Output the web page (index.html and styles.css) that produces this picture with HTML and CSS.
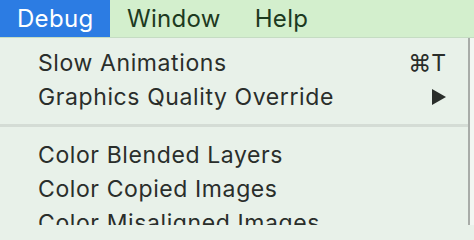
FILE: index.html
```html
<!DOCTYPE html>
<html>
<head>
<meta charset="utf-8">
<link rel="stylesheet" href="styles.css">
</head>
<body>
<div class="menubar">
  <div class="mitem active">Debug</div>
  <div class="mitem">Window</div>
  <div class="mitem">Help</div>
</div>
<div class="stage">
  <div class="menu">
    <div class="row"><span>Slow Animations</span><span class="key">⌘T</span></div>
    <div class="row"><span>Graphics Quality Override</span><span class="arrow"></span></div>
    <div class="sep"></div>
    <div class="row"><span>Color Blended Layers</span></div>
    <div class="row"><span>Color Copied Images</span></div>
    <div class="row"><span>Color Misaligned Images</span></div>
  </div>
  <div class="outside"></div>
</div>
</body>
</html>
```
FILE: styles.css
```css
html, body {
  margin: 0;
  padding: 0;
  height: 225px;
  overflow: hidden;
  background: #e8f1e9;
  font-family: Inter, "Liberation Sans", Arial, sans-serif;
}
body {
  display: flex;
  flex-direction: column;
}
.menubar {
  display: flex;
  flex: none;
  height: 38px;
  background: #d3efcd;
  border-bottom: 1px solid #c5dcc3;
  box-sizing: border-box;
}
.mitem {
  padding: 0 17px;
  font-size: 24px;
  letter-spacing: 0.3px;
  line-height: 38px;
  color: #1d3a1f;
}
.active {
  background: #2c7ce3;
  color: #ffffff;
  width: 110px;
  box-sizing: border-box;
}
.stage {
  display: flex;
  flex: 1;
  min-height: 0;
  overflow: hidden;
}
.menu {
  width: 470px;
  background: #e8f1e9;
  border-right: 2px solid #a8aca8;
  box-sizing: border-box;
  padding-top: 8px;
  color: #2a2e2b;
}
.row {
  display: flex;
  justify-content: space-between;
  align-items: center;
  height: 34px;
  padding: 0 22px 0 38px;
  font-size: 23px;
  letter-spacing: 0.6px;
  white-space: nowrap;
}
.key {
  letter-spacing: 0;
}
.arrow {
  width: 0;
  height: 0;
  border-left: 14px solid #2a2e2b;
  border-top: 8px solid transparent;
  border-bottom: 8px solid transparent;
}
.sep {
  height: 3px;
  background: #d4dcd5;
  margin: 10px 0 11px;
}
.outside {
  flex: 1;
  background: #f2f6f2;
}
```
